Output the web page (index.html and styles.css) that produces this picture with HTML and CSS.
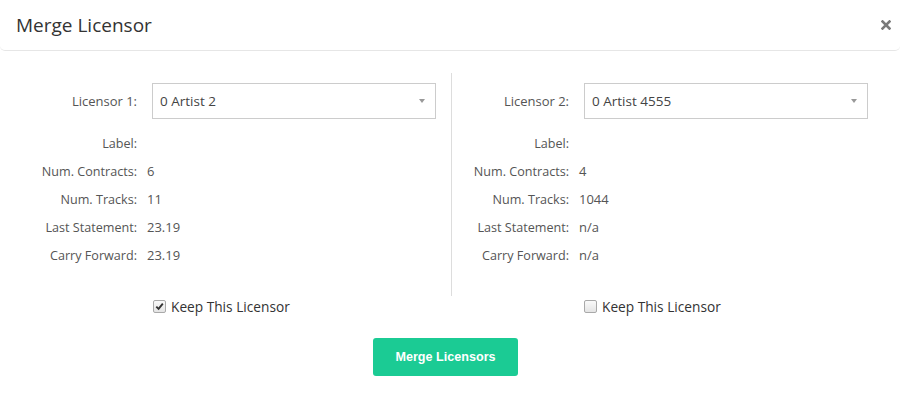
FILE: index.html
```html
<!DOCTYPE html>
<html lang="en">
<head>
    <meta charset="UTF-8">
    <title>Merge Licensor</title>
    <link rel="stylesheet" href="styles.css">
</head>
<body>
    <div class="modal">
        <!-- Header -->
        <div class="modal-header">
            <h4 class="modal-title">Merge Licensor</h4>
            <button class="close" type="button">
                <svg width="10" height="10" viewBox="0 0 10 10"><path d="M1.5 1.5 L8.5 8.5 M8.5 1.5 L1.5 8.5" stroke="#7a7a7a" stroke-width="2.6" stroke-linecap="square"/></svg>
            </button>
        </div>

        <div class="modal-body">
            <div class="cols">
                <!-- Licensor 1 -->
                <div class="col">
                    <div class="pick-row">
                        <label class="lbl">Licensor 1:</label>
                        <div class="select">
                            <span>0 Artist 2</span>
                            <i class="caret"></i>
                        </div>
                    </div>
                    <div class="details">
                        <span class="lbl">Label:</span><span class="val"></span>
                        <span class="lbl">Num. Contracts:</span><span class="val">6</span>
                        <span class="lbl">Num. Tracks:</span><span class="val">11</span>
                        <span class="lbl">Last Statement:</span><span class="val">23.19</span>
                        <span class="lbl">Carry Forward:</span><span class="val">23.19</span>
                    </div>
                </div>

                <!-- Licensor 2 -->
                <div class="col col-right">
                    <div class="pick-row">
                        <label class="lbl">Licensor 2:</label>
                        <div class="select">
                            <span>0 Artist 4555</span>
                            <i class="caret"></i>
                        </div>
                    </div>
                    <div class="details">
                        <span class="lbl">Label:</span><span class="val"></span>
                        <span class="lbl">Num. Contracts:</span><span class="val">4</span>
                        <span class="lbl">Num. Tracks:</span><span class="val">1044</span>
                        <span class="lbl">Last Statement:</span><span class="val">n/a</span>
                        <span class="lbl">Carry Forward:</span><span class="val">n/a</span>
                    </div>
                </div>
            </div>

            <div class="keep-row">
                <label class="keep">
                    <span class="box checked">
                        <svg width="9" height="9" viewBox="0 0 9 9"><path d="M1.3 4.6 L3.6 6.9 L7.8 1.6" fill="none" stroke="#333" stroke-width="1.9"/></svg>
                    </span>
                    Keep This Licensor
                </label>
                <label class="keep">
                    <span class="box"></span>
                    Keep This Licensor
                </label>
            </div>

            <div class="actions">
                <button class="btn-merge" type="button">Merge Licensors</button>
            </div>
        </div>
    </div>
</body>
</html>
```

FILE: styles.css
```css
/* Ogolne */
body {
    margin: 0;
    background: #fff;
    font-family: "Open Sans", "Liberation Sans", sans-serif;
    color: #555;
}

.modal {
    width: 900px;
    height: 393px;
    background: #fff;
}

/* Naglowek */
.modal-header {
    height: 50px;
    display: flex;
    align-items: center;
    justify-content: space-between;
    padding: 0 9px 0 16px;
    border-bottom: 1px solid #e6e6e6;
    border-radius: 0 0 5px 5px;
}

.modal-title {
    margin: 0;
    font-size: 19px;
    font-weight: 400;
    color: #333;
}

.close {
    border: none;
    background: none;
    padding: 0;
    width: 10px;
    height: 10px;
    display: flex;
    cursor: pointer;
}

/* Tresc */
.modal-body {
    padding: 22px 17px 0 20px;
    font-size: 13px;
}

.cols {
    display: grid;
    grid-template-columns: 431px 432px;
}

.col {
    padding: 10px 0 27px;
}

.col-right {
    border-left: 1px solid #ddd;
}

.pick-row {
    display: flex;
    align-items: center;
    height: 36px;
}

.lbl {
    width: 117px;
    text-align: right;
    color: #555;
}

.select {
    margin-left: 15px;
    width: 284px;
    height: 36px;
    box-sizing: border-box;
    border: 1px solid #ccc;
    display: flex;
    align-items: center;
    justify-content: space-between;
    padding: 0 10px 0 7px;
    color: #444;
    font-size: 13.5px;
}

.caret {
    width: 0;
    height: 0;
    border-left: 3.5px solid transparent;
    border-right: 3.5px solid transparent;
    border-top: 4px solid #999;
}

.details {
    margin-top: 10px;
    display: grid;
    grid-template-columns: 117px 1fr;
    column-gap: 10px;
    grid-auto-rows: 28px;
    align-items: center;
}

.details .lbl {
    font-size: 12.6px;
}

.val {
    color: #555;
}

/* Checkboxy */
.keep-row {
    display: grid;
    grid-template-columns: 431px 432px;
    height: 20px;
}

.keep {
    padding-left: 133px;
    display: flex;
    align-items: center;
    gap: 5px;
    color: #333;
    font-size: 13.7px;
}

.box {
    width: 11px;
    height: 11px;
    border: 1px solid #a9a9a9;
    border-radius: 2px;
    background: linear-gradient(#fafafa, #e4e4e4);
    display: flex;
    align-items: center;
    justify-content: center;
}

/* Przycisk */
.actions {
    display: flex;
    justify-content: center;
    margin-top: 22px;
    padding-right: 12px;
}

.btn-merge {
    width: 145px;
    height: 38px;
    border: none;
    border-radius: 3px;
    background: #1bcb94;
    color: #fff;
    font-family: "Liberation Sans", Arial, sans-serif;
    font-weight: bold;
    font-size: 12.6px;
    cursor: pointer;
}
```
